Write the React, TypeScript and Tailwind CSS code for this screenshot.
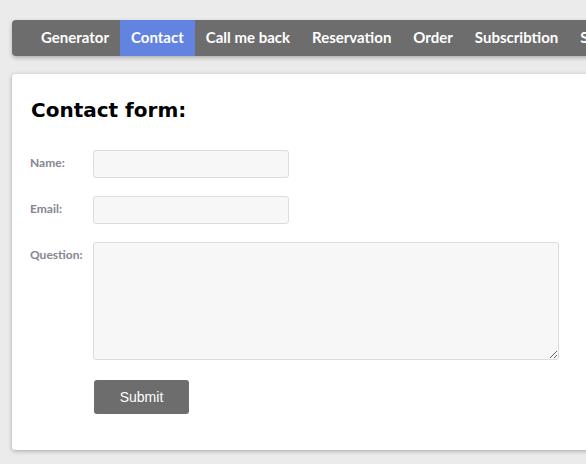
import React from 'react';

const navItems = ['Generator', 'Contact', 'Call me back', 'Reservation', 'Order', 'Subscribtion', 'Support'];

const App = () => {
  return (
    <div className="w-[586px] h-[464px] overflow-hidden bg-[#ebebeb]">
      <div className="w-[720px] pl-[12px] pt-[20px]">
        {/* Top menu */}
        <nav className="flex h-[36px] rounded-l-[4px] bg-[#6d6d6d] pl-[18px] shadow-[0_2px_4px_rgba(0,0,0,0.25)]">
          {navItems.map((item) => (
            <a
              key={item}
              className={`flex shrink-0 items-center whitespace-nowrap px-[11px] pb-[1px] text-[15px] font-bold text-white font-['Lato',sans-serif] ${
                item === 'Contact' ? 'bg-[#6383e0]' : ''
              }`}
            >
              {item}
            </a>
          ))}
        </nav>

        {/* Form card */}
        <div className="mt-[18px] h-[376px] rounded-l-[3px] bg-white pl-[18px] pt-[20px] shadow-[0_1px_4px_rgba(0,0,0,0.3)]">
          <h2 className="pl-[1px] text-[20px] font-bold leading-[32px] text-black font-['DejaVu_Sans',sans-serif]">Contact form:</h2>

          <div className="mt-[24px] flex flex-col gap-[18px] font-['Lato',sans-serif]">
            <div className="flex items-start">
              <label className="w-[63px] pt-[4px] text-[12px] font-bold text-[#858590]">Name:</label>
              <input className="h-[28px] w-[196px] rounded-[3px] border border-[#dcdcdc] bg-[#f7f7f7] outline-none" />
            </div>
            <div className="flex items-start">
              <label className="w-[63px] pt-[4px] text-[12px] font-bold text-[#858590]">Email:</label>
              <input className="h-[28px] w-[196px] rounded-[3px] border border-[#dcdcdc] bg-[#f7f7f7] outline-none" />
            </div>
            <div className="flex items-start">
              <label className="w-[63px] pt-[4px] text-[12px] font-bold text-[#858590]">Question:</label>
              <textarea className="h-[118px] w-[466px] rounded-[3px] border border-[#dcdcdc] bg-[#f7f7f7] outline-none" />
            </div>
            <div className="flex pl-[64px] pt-[2px]">
              <button className="h-[34px] w-[95px] rounded-[3px] bg-[#6d6d6d] text-[14px] text-white font-['Liberation_Sans',sans-serif]">
                Submit
              </button>
            </div>
          </div>
        </div>
      </div>
    </div>
  );
};

export default App;
